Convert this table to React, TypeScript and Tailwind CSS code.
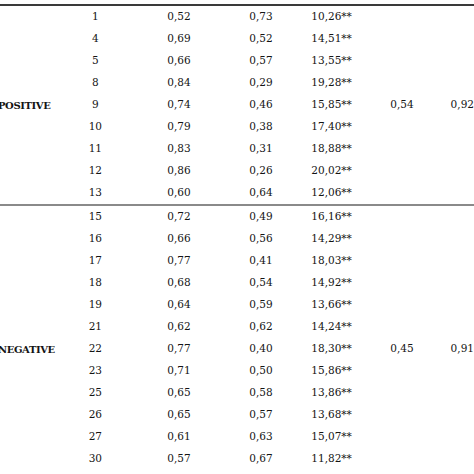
import React from "react";

type Row = [string, string, string, string];

const positive: Row[] = [
  ["1", "0,52", "0,73", "10,26**"],
  ["4", "0,69", "0,52", "14,51**"],
  ["5", "0,66", "0,57", "13,55**"],
  ["8", "0,84", "0,29", "19,28**"],
  ["9", "0,74", "0,46", "15,85**"],
  ["10", "0,79", "0,38", "17,40**"],
  ["11", "0,83", "0,31", "18,88**"],
  ["12", "0,86", "0,26", "20,02**"],
  ["13", "0,60", "0,64", "12,06**"],
];

const negative: Row[] = [
  ["15", "0,72", "0,49", "16,16**"],
  ["16", "0,66", "0,56", "14,29**"],
  ["17", "0,77", "0,41", "18,03**"],
  ["18", "0,68", "0,54", "14,92**"],
  ["19", "0,64", "0,59", "13,66**"],
  ["21", "0,62", "0,62", "14,24**"],
  ["22", "0,77", "0,40", "18,30**"],
  ["23", "0,71", "0,50", "15,86**"],
  ["25", "0,65", "0,58", "13,86**"],
  ["26", "0,65", "0,57", "13,68**"],
  ["27", "0,61", "0,63", "15,07**"],
  ["30", "0,57", "0,67", "11,82**"],
  ["31", "0,64", "0,59", "13,57**"],
];

function Group({
  label,
  rows,
  a,
  b,
  border,
}: {
  label: string;
  rows: Row[];
  a: string;
  b: string;
  border: string;
}) {
  return (
    <div className={"flex " + border}>
      <div className="w-[59px] -ml-[2px] flex items-center font-bold text-[10px] tracking-[-0.4px]">
        {label}
      </div>
      <div className="flex flex-col">
        {rows.map((r) => (
          <div key={r[0]} className="h-[22px] flex items-center">
            <div className="w-[78px] text-center">{r[0]}</div>
            <div className="w-[115px] pl-[33px]">{r[1]}</div>
            <div className="w-[62px]">{r[2]}</div>
            <div className="w-[79px]">{r[3]}</div>
          </div>
        ))}
      </div>
      <div className="w-[61px] flex items-center">{a}</div>
      <div className="flex items-center">{b}</div>
    </div>
  );
}

export default function App() {
  return (
    <div
      className="w-[474px] h-[474px] overflow-hidden bg-white text-[#141414] text-[10.5px] pt-[4px]"
      style={{ fontFamily: '"DejaVu Serif", serif' }}
    >
      <Group label="POSITIVE" rows={positive} a="0,54" b="0,92" border="border-t-2 border-[#3a3a3a]" />
      <Group label="NEGATIVE" rows={negative} a="0,45" b="0,91" border="border-t-2 border-[#8a8a8a]" />
    </div>
  );
}
